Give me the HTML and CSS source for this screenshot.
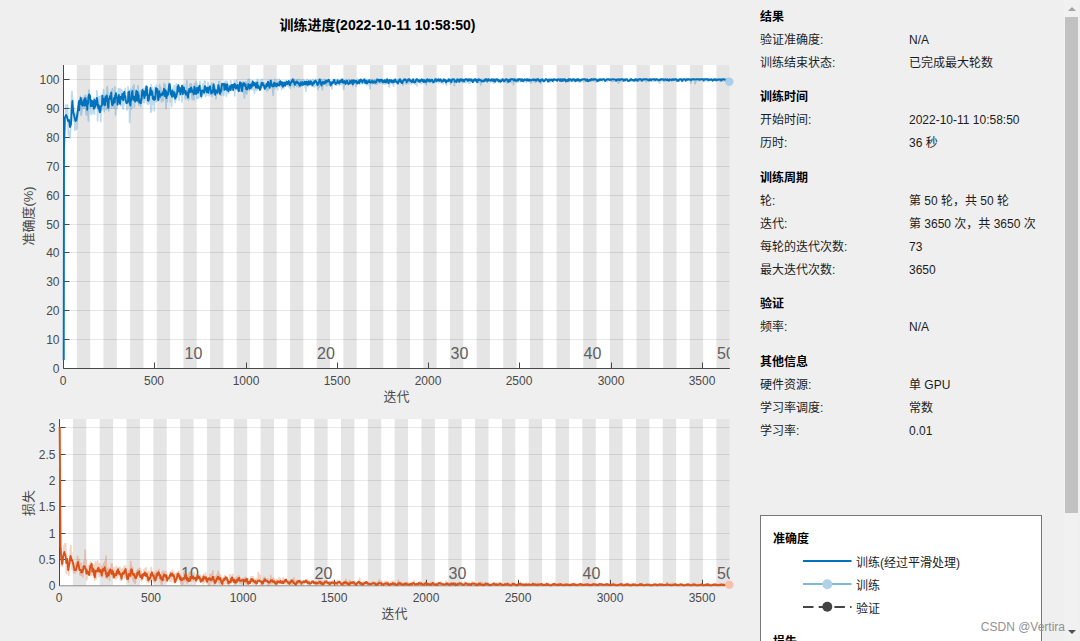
FILE: index.html
```
<!DOCTYPE html>
<html lang="zh-CN">
<head>
  <meta charset="UTF-8" />
  <meta name="viewport" content="width=device-width, initial-scale=1.0" />
  <title>训练进度</title>
  <link rel="stylesheet" href="styles.css">
</head>
<body>
  <main class="charts">
    <h1>训练进度(2022-10-11 10:58:50)</h1>
    <svg id="accuracy" class="chart" width="745" height="360"></svg>
    <svg id="loss" class="chart" width="745" height="231"></svg>
  </main>

  <aside class="sidebar">
    <section class="group">
      <h2>结果</h2>
      <dl>
        <dt>验证准确度:</dt><dd>N/A</dd>
        <dt>训练结束状态:</dt><dd>已完成最大轮数</dd>
      </dl>
    </section>
    <section class="group">
      <h2>训练时间</h2>
      <dl>
        <dt>开始时间:</dt><dd>2022-10-11 10:58:50</dd>
        <dt>历时:</dt><dd>36 秒</dd>
      </dl>
    </section>
    <section class="group">
      <h2>训练周期</h2>
      <dl>
        <dt>轮:</dt><dd>第 50 轮，共 50 轮</dd>
        <dt>迭代:</dt><dd>第 3650 次，共 3650 次</dd>
        <dt>每轮的迭代次数:</dt><dd>73</dd>
        <dt>最大迭代次数:</dt><dd>3650</dd>
      </dl>
    </section>
    <section class="group">
      <h2>验证</h2>
      <dl>
        <dt>频率:</dt><dd>N/A</dd>
      </dl>
    </section>
    <section class="group">
      <h2>其他信息</h2>
      <dl>
        <dt>硬件资源:</dt><dd>单 GPU</dd>
        <dt>学习率调度:</dt><dd>常数</dd>
        <dt>学习率:</dt><dd>0.01</dd>
      </dl>
    </section>

    <section class="legend">
      <h2>准确度</h2>
      <div class="legend-row">
        <svg width="49" height="12"><path d="M0 6H48.5" stroke="#0072bd" stroke-width="2" /></svg>
        <span>训练(经过平滑处理)</span>
      </div>
      <div class="legend-row">
        <svg width="49" height="12"><path d="M0 6H48.5" stroke="#80b8da" stroke-width="1.8" /><circle cx="24.3" cy="6.2" r="5" fill="#b0d2e9" /></svg>
        <span>训练</span>
      </div>
      <div class="legend-row">
        <svg width="49" height="12"><path d="M0 6H48.5" stroke="#444" stroke-width="2" stroke-dasharray="10.5 5.2" /><circle cx="24.3" cy="5.8" r="5" fill="#444" /></svg>
        <span>验证</span>
      </div>
      <h2 class="next">损失</h2>
    </section>
  </aside>

  <div class="scrollbar">
    <div class="arrow up"></div>
    <div class="thumb"></div>
    <div class="arrow down"></div>
  </div>

  <div class="watermark">CSDN @Vertira</div>

  <script src="charts.js"></script>
</body>
</html>
```

FILE: styles.css
```
* {
  margin: 0;
  padding: 0;
  box-sizing: border-box;
}

body {
  display: flex;
  height: 641px;
  overflow: hidden;
  position: relative;
  background: #efefef;
  color: #1c1c1c;
  font-family: "Liberation Sans", "Noto Sans CJK SC", sans-serif;
  font-size: 12px;
}

.charts {
  display: flex;
  flex-direction: column;
  width: 760px;
}

h1 {
  width: 755px;
  height: 50px;
  font-size: 14px;
  line-height: 50px;
  color: #000;
  text-align: center;
}

.chart {
  display: block;
  flex: none;
}

.chart text {
  font-size: 12px;
  fill: #4a4a4a;
}

.chart .axis-label {
  font-size: 13px;
  text-anchor: middle;
}

.chart .epoch {
  font-size: 16px;
  fill: #606060;
}

.sidebar {
  width: 304px;
  height: 641px;
  padding-top: 5.9px;
  overflow: hidden;
}

.sidebar h2 {
  height: 23px;
  font-size: 12px;
  line-height: 23px;
  color: #000;
}

.group {
  margin-bottom: 11.5px;
}

.group dl {
  display: grid;
  grid-template-columns: 149px 1fr;
  grid-auto-rows: 23px;
  line-height: 23px;
}

.legend {
  width: 282px;
  height: 220px;
  margin-top: 72px;
  padding: 12px 12px;
  border: 1px solid #777;
  background: #fff;
}

.legend-row {
  display: flex;
  align-items: center;
  gap: 4px;
  height: 23px;
  padding: 0 0 2px 30px;
}

.legend-row svg {
  fill: none;
}

.sidebar .next {
  margin-top: 11px;
}

.scrollbar {
  display: flex;
  flex-direction: column;
  align-items: center;
  width: 15px;
  height: 641px;
  background: #f1f1f1;
}

.thumb {
  width: 13px;
  height: 496px;
  background: #c1c1c1;
}

.arrow {
  width: 0;
  height: 0;
  border: 4px solid transparent;
}

.up {
  margin: 3px 0 6px;
  border-bottom-color: #a3a3a3;
}

.down {
  margin-top: auto;
  margin-bottom: 3px;
  border-top-color: #505050;
}

.watermark {
  position: absolute;
  right: 15px;
  bottom: 5px;
  font-size: 12px;
  line-height: 18px;
  color: #929292;
}
```

FILE: charts.js
```
const ITERATIONS = 3650;
const EPOCHS = 50;

// small seeded generator so the curves look the same on every load
function createRandom(seed) {
  return () => {
    seed = (seed * 1664525 + 1013904223) % 4294967296;
    return seed / 4294967296;
  };
}

// linear interpolation over [x, value] pairs
function interpolate(points, x) {
  for (let i = 1; i < points.length; i++) {
    if (x <= points[i][0]) {
      const [x1, y1] = points[i - 1];
      const [x2, y2] = points[i];
      return y1 + (y2 - y1) * (x - x1) / (x2 - x1);
    }
  }
  return points[points.length - 1][1];
}

function buildCurves(c) {
  const random = createRandom(c.seed);
  const smooth = c.start.map(p => p.join(" "));
  const raw = c.start.slice(0, 3).map(p => p.join(" "));
  const first = c.start[c.start.length - 1][0];
  let drift = 0;

  for (let x = c.start[2][0]; x <= c.right; x += 0.4) {
    const base = x < first ? interpolate(c.start, x) : interpolate(c.mean, x);
    const amp = interpolate(c.spread, x);
    drift = drift * 0.45 + (random() - 0.5) * c.jitter;
    const wave = Math.sin((x - c.left) * 2 * Math.PI / c.period) * c.wave;
    const y = base + (wave + drift) * amp;
    if (x > first) {
      smooth.push(x.toFixed(2) + " " + Math.min(c.max, Math.max(c.min, y)).toFixed(2));
    }
    const spike = random() < 0.08 ? (random() * 2.2 + 0.8) * c.spike : 0;
    const noisy = base + ((random() - 0.5) * 4.2 + wave + spike) * amp;
    raw.push(x.toFixed(2) + " " + Math.min(c.max, Math.max(c.min, noisy)).toFixed(2));
  }
  return { smooth: smooth.join(" "), raw: raw.join(" ") };
}

function drawChart(c) {
  const svg = document.getElementById(c.id);
  const xOf = i => c.left + (c.right - c.left) * i / ITERATIONS;
  const snap = v => Math.floor(v) + 0.5;
  const stripe = (c.right - c.left) / EPOCHS;
  let out = `<defs><clipPath id="${c.id}-clip"><rect x="${c.left}" y="${c.top}" width="${c.right - c.left}" height="${c.bottom - c.top}"/></clipPath></defs>`;
  out += `<rect x="${c.left}" y="${c.top}" width="${c.right - c.left}" height="${c.bottom - c.top}" fill="#fff"/>`;
  for (let i = 1; i < EPOCHS; i += 2) {
    out += `<rect x="${c.left + i * stripe}" y="${c.top}" width="${stripe}" height="${c.bottom - c.top}" fill="#e5e5e5"/>`;
  }

  let ticks = "";
  c.yTicks.forEach(value => {
    const y = snap(c.bottom - value * c.unit);
    if (value > 0) {
      out += `<path d="M${c.left} ${y}H${c.right}" stroke="#262626" stroke-opacity="0.11"/>`;
      ticks += `M${c.left} ${y}h6`;
    }
    out += `<text x="${c.left - 4}" y="${y + 4.5}" text-anchor="end">${value}</text>`;
  });
  for (let i = 0; i <= 3500; i += 500) {
    const x = snap(xOf(i));
    ticks += `M${x} ${c.bottom}v-6`;
    out += `<text x="${x - 0.5}" y="${c.bottom + 16}" text-anchor="middle">${i}</text>`;
  }

  out += `<g clip-path="url(#${c.id}-clip)">`;
  c.epochX.forEach((x, i) => {
    out += `<text class="epoch" x="${x}" y="${c.epochY}">${(i + 1) * 10}</text>`;
  });
  out += "</g>";
  out += `<path d="${ticks}M${c.left} ${c.top}V${c.bottom}" stroke="#484848" fill="none"/>`;
  out += `<path d="M${c.left} ${c.bottom}H${c.right}" stroke="${c.baseline}"/>`;

  const curves = buildCurves(c);
  out += `<g fill="none" stroke="${c.color}" stroke-linejoin="round">`;
  out += `<polyline points="${curves.raw}" stroke-width="1.7" stroke-opacity="0.26"/>`;
  out += `<polyline points="${curves.smooth}" stroke-width="1.9"/></g>`;
  out += `<circle cx="${c.right - 0.5}" cy="${c.dotY}" r="4.2" fill="${c.dot}"/>`;

  out += `<text class="axis-label" x="${c.labelX}" y="${c.bottom + 32.5}">迭代</text>`;
  out += `<text class="axis-label" transform="translate(33 ${c.labelY}) rotate(-90)">${c.label}</text>`;
  svg.innerHTML = out;
}

drawChart({
  id: "accuracy", label: "准确度(%)", labelY: 166, labelX: 396.6,
  left: 63.5, right: 729.8, top: 15, bottom: 318.5, unit: 2.89,
  yTicks: [0, 10, 20, 30, 40, 50, 60, 70, 80, 90, 100],
  epochX: [184.5, 317, 450.5, 583.5, 717], epochY: 309,
  color: "#0072bd", dot: "#a9cfe9", dotY: 31.8, baseline: "#484848",
  seed: 11, period: 4.44, wave: 0.4, jitter: 2.1, spike: 1, min: 29.3, max: 318,
  start: [[63.7, 310], [64, 100], [64.8, 68], [66, 65], [67, 67], [68, 71], [69, 70], [70, 77], [71, 74], [71.6, 60], [72.4, 51], [73.2, 62], [74.5, 67], [75.5, 71], [76.5, 70], [78, 59], [79, 51]],
  mean: [[79, 55], [90, 54], [100, 51], [120, 48.5], [140, 46], [160, 43.5], [200, 40], [240, 36.5], [270, 34.5], [300, 33], [350, 31.8], [400, 31], [450, 30.4], [510, 29.9], [730, 29.5]],
  spread: [[64, 7], [80, 6], [150, 5], [200, 4], [270, 2.5], [350, 1.6], [450, 1.2], [600, 1], [730, 0.8]]
});

drawChart({
  id: "loss", label: "损失", labelY: 93, labelX: 394.5,
  left: 59.5, right: 729.8, top: 9, bottom: 175.8, unit: 52.7,
  yTicks: [0, 0.5, 1, 1.5, 2, 2.5, 3],
  epochX: [181, 314.5, 448.5, 582.5, 717], epochY: 169,
  color: "#d95319", dot: "#f7c0aa", dotY: 174.8, baseline: "#8c8c8c",
  seed: 29, period: 6.7, wave: 0.7, jitter: 1.5, spike: -0.7, min: 9, max: 175.2,
  start: [[59.7, 17], [60.5, 135], [61.2, 147], [62.2, 154], [63.2, 146], [64.3, 142], [65.3, 145], [66.5, 153], [67.3, 149], [68.2, 160], [69.5, 153], [70.5, 146], [71.5, 149], [73, 153], [74.5, 160], [76, 160], [78, 152], [79.5, 160], [81, 160]],
  mean: [[81, 159], [100, 161.5], [120, 163.5], [150, 166], [200, 168.8], [240, 170.6], [300, 172.4], [400, 174], [550, 174.7], [730, 175]],
  spread: [[60, 6], [80, 4.4], [120, 3.5], [200, 2.6], [300, 1.4], [400, 0.9], [550, 0.6], [730, 0.5]]
});
```
